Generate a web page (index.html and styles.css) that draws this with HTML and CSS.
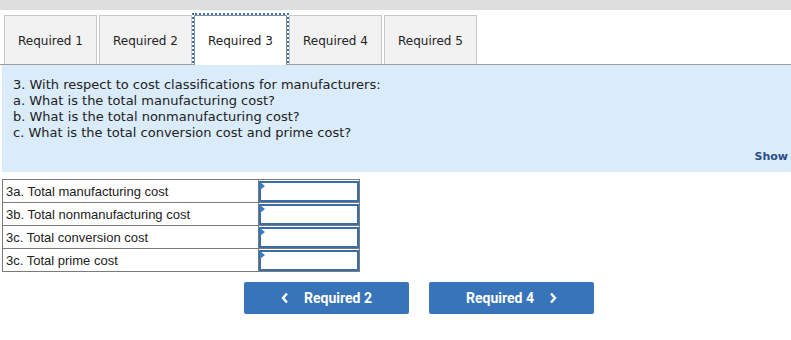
FILE: index.html
```html
<!DOCTYPE html>
<html lang="en">
<head>
<meta charset="UTF-8">
<title>Required 3</title>
<link rel="stylesheet" href="styles.css">
</head>
<body>

<div class="topbar"></div>

<div class="tabs">
    <div class="tab">Required 1</div>
    <div class="tab">Required 2</div>
    <div class="tab active">Required 3</div>
    <div class="tab">Required 4</div>
    <div class="tab">Required 5</div>
</div>

<div class="question">
    <p>3. With respect to cost classifications for manufacturers:</p>
    <p>a. What is the total manufacturing cost?</p>
    <p>b. What is the total nonmanufacturing cost?</p>
    <p>c. What is the total conversion cost and prime cost?</p>
    <div class="show">Show</div>
</div>

<table class="answers">
    <tr><td class="label">3a. Total manufacturing cost</td><td class="cell"><div class="input"></div></td></tr>
    <tr><td class="label">3b. Total nonmanufacturing cost</td><td class="cell"><div class="input"></div></td></tr>
    <tr><td class="label">3c. Total conversion cost</td><td class="cell"><div class="input"></div></td></tr>
    <tr><td class="label">3c. Total prime cost</td><td class="cell"><div class="input"></div></td></tr>
</table>

<div class="nav">
    <button class="navbtn">
        <svg class="chev" width="8" height="12" viewBox="0 0 8 12"><path d="M6 1.5 L2 6 L6 10.5" fill="none" stroke="#fff" stroke-width="2.4"/></svg>
        Required 2
    </button>
    <button class="navbtn">
        Required 4
        <svg class="chev" width="8" height="12" viewBox="0 0 8 12"><path d="M2 1.5 L6 6 L2 10.5" fill="none" stroke="#fff" stroke-width="2.4"/></svg>
    </button>
</div>

</body>
</html>
```

FILE: styles.css
```css
body {
    margin: 0;
    padding: 0;
    font-family: "DejaVu Sans", Verdana, sans-serif;
    background-color: #ffffff;
    width: 791px;
}

.topbar {
    height: 10px;
    background-color: #dedede;
}

.tabs {
    display: flex;
    align-items: flex-end;
    gap: 2px;
    padding-left: 4px;
    margin-top: 6px;
    border-bottom: 1px solid #9c9c9c;
    height: 48px;
}

.tab {
    width: 91px;
    height: 46px;
    background-color: #f2f2f2;
    border: 1px solid #c8c8c8;
    border-bottom: none;
    font-size: 12px;
    color: #222;
    display: flex;
    align-items: center;
    justify-content: center;
    padding-top: 2px;
}

.tab.active {
    background-color: #ffffff;
    border: 1px solid #8e8e8e;
    border-bottom: none;
    outline: 2px dotted #3a73b5;
    height: 49px;
    padding-top: 0;
    margin-bottom: -1px;
}

.question {
    margin-left: 2px;
    background-color: #daebf9;
    padding: 12px 0 0 11px;
    height: 95px;
    font-size: 13px;
    color: #222;
    position: relative;
}

.question p {
    margin: 0;
    line-height: 16px;
}

.show {
    position: absolute;
    right: 3px;
    top: 85px;
    font-size: 11px;
    font-weight: bold;
    color: #2b4e87;
}

.answers {
    border-collapse: collapse;
    margin: 7px 0 0 2px;
    font-family: "Liberation Sans", Arial, sans-serif;
    font-size: 13px;
    color: #222;
}

.answers td {
    border: 1px solid #7a7a7a;
    height: 22px;
    padding: 0;
}

.label {
    width: 252px;
    padding-left: 3px !important;
}

.cell {
    width: 100px;
}

.input {
    height: 17px;
    border: 2px solid #3a6ea8;
    position: relative;
}

.input::before {
    content: "";
    position: absolute;
    left: -1px;
    top: -1px;
    border-left: 5px solid #3a7ccb;
    border-top: 4px solid transparent;
    border-bottom: 4px solid transparent;
}

.nav {
    display: flex;
    gap: 20px;
    margin: 10px 0 0 244px;
}

.navbtn {
    width: 165px;
    height: 32px;
    background-color: #3774b9;
    border: none;
    border-radius: 2px;
    color: #ffffff;
    font-family: Roboto, "Liberation Sans", sans-serif;
    font-weight: bold;
    font-size: 14px;
    display: flex;
    align-items: center;
    justify-content: center;
    gap: 15px;
}
```
